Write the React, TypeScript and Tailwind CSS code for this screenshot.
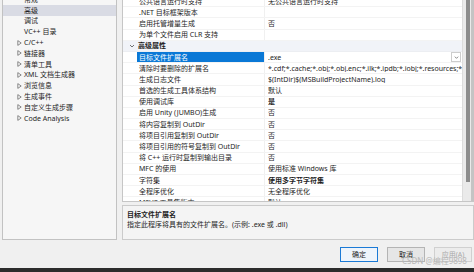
const FONT = "font-['Noto_Sans','Noto_Sans_CJK_SC',sans-serif]";

type TreeItem = { label: string; arrow?: boolean; active?: boolean };

const TREE: TreeItem[] = [
	{ label: "常规" },
	{ label: "高级", active: true },
	{ label: "调试" },
	{ label: "VC++ 目录" },
	{ label: "C/C++", arrow: true },
	{ label: "链接器", arrow: true },
	{ label: "清单工具", arrow: true },
	{ label: "XML 文档生成器", arrow: true },
	{ label: "浏览信息", arrow: true },
	{ label: "生成事件", arrow: true },
	{ label: "自定义生成步骤", arrow: true },
	{ label: "Code Analysis", arrow: true },
];

type Row = {
	name: string;
	value?: string;
	bold?: boolean;
	selected?: boolean;
	category?: boolean;
	dropdown?: boolean;
};

const ROWS: Row[] = [
	{ name: "公共语言运行时支持", value: "无公共语言运行时支持" },
	{ name: ".NET 目标框架版本", value: "" },
	{ name: "启用托管增量生成", value: "否" },
	{ name: "为单个文件启用 CLR 支持", value: "" },
	{ name: "高级属性", category: true },
	{ name: "目标文件扩展名", value: ".exe", selected: true, dropdown: true },
	{
		name: "清除时要删除的扩展名",
		value: "*.cdf;*.cache;*.obj;*.obj.enc;*.ilk;*.ipdb;*.iobj;*.resources;*.tlb;*.tli;*.tlh;*.tmp;*.rsp",
	},
	{ name: "生成日志文件", value: "$(IntDir)$(MSBuildProjectName).log" },
	{ name: "首选的生成工具体系结构", value: "默认" },
	{ name: "使用调试库", value: "是", bold: true },
	{ name: "启用 Unity (JUMBO)生成", value: "否" },
	{ name: "将内容复制到 OutDir", value: "否" },
	{ name: "将项目引用复制到 OutDir", value: "否" },
	{ name: "将项目引用的符号复制到 OutDir", value: "否" },
	{ name: "将 C++ 运行时复制到输出目录", value: "否" },
	{ name: "MFC 的使用", value: "使用标准 Windows 库" },
	{ name: "字符集", value: "使用多字节字符集", bold: true },
	{ name: "全程序优化", value: "无全程序优化" },
	{ name: "MSVC 工具集版本", value: "默认" },
];

function TreeArrow() {
	return (
		<svg width="5" height="6" viewBox="0 0 5 6" className="shrink-0">
			<path d="M0.8 0.6 L4.2 3 L0.8 5.4 Z" fill="none" stroke="#707070" strokeWidth="0.8" />
		</svg>
	);
}

function Chevron({ size = 6 }: { size?: number }) {
	return (
		<svg width={size} height={size} viewBox="0 0 6 6">
			<path d="M1 2 L3 4 L5 2" fill="none" stroke="#505050" strokeWidth="0.8" />
		</svg>
	);
}

function PropRow({ row }: { row: Row }) {
	if (row.category) {
		return (
			<div className="h-[11.2px] flex items-center bg-[#f1f3f8] border-b border-[#eceef2]">
				<div className="w-[15px] shrink-0 flex justify-center pl-[3px]">
					<Chevron />
				</div>
				<span className="font-bold text-[#1b1b1b]">{row.name}</span>
			</div>
		);
	}
	return (
		<div className="h-[11.2px] flex items-stretch border-b border-[#f3f3f3]">
			<div className="w-[14px] shrink-0" />
			<div
				className={`w-[127px] shrink-0 flex items-center pl-[2px] whitespace-nowrap overflow-hidden ${
					row.selected ? "bg-[#0a78d6] text-white" : "text-[#1e1e1e]"
				}`}
			>
				{row.name}
			</div>
			<div className="w-px bg-[#f0f0f0] shrink-0" />
			<div
				className={`flex-1 min-w-0 flex items-center pl-[3px] whitespace-nowrap overflow-hidden text-[#1e1e1e] ${
					row.bold ? "font-bold" : ""
				}`}
			>
				<span className="flex-1 min-w-0 overflow-hidden">{row.value}</span>
				{row.dropdown && (
					<div className="w-[10px] h-[10px] mr-[1px] border border-[#cdcdcd] bg-white flex items-center justify-center shrink-0">
						<Chevron size={5} />
					</div>
				)}
			</div>
		</div>
	);
}

export default function App() {
	return (
		<div className={`w-[474px] h-[272px] overflow-hidden bg-[#f0f0f0] relative flex flex-col text-[7px] leading-none ${FONT}`}>
			<div className="h-[268px] flex flex-col">
				<div className="h-[240px] flex">
					{/* tree */}
					<div className="ml-[2px] w-[115px] shrink-0 h-[240px] border border-t-0 border-[#c2c2c2] bg-[#f6f6f6] overflow-hidden">
						<div className="mt-[-6px]">
							{TREE.map((t) => (
								<div
									key={t.label}
									className={`h-[10.8px] flex items-center ${t.active ? "bg-[#d9dbe4]" : ""}`}
								>
									<div className="w-[21px] shrink-0 pl-[14px] flex items-center">
										{t.arrow && <TreeArrow />}
									</div>
									<span className="text-[#1e1e1e] whitespace-nowrap">{t.label}</span>
								</div>
							))}
						</div>
					</div>

					{/* right side */}
					<div className="ml-[5px] flex-1 min-w-0 flex flex-col">
						<div className="h-[202px] flex border-l border-b border-[#c6c6c6] bg-white overflow-hidden">
							<div className="flex-1 min-w-0 overflow-hidden">
								<div className="mt-[-4px]">
									{ROWS.map((r) => (
										<PropRow key={r.name} row={r} />
									))}
								</div>
							</div>
							<div className="w-[12px] shrink-0 bg-[#eaeaea] border-l border-[#dcdcdc] flex">
								<div className="ml-[3px] w-[4px] h-[182px] bg-[#8c8c8c]" />
								<div className="ml-auto w-[3px] bg-[#c4c4c4]" />
							</div>
						</div>
						<div className="mt-[3px] h-[35px] border border-[#cbcbcb] bg-[#f4f4f4] px-[4px] pt-[5px] flex flex-col gap-[3px] text-[#1e1e1e]">
							<div className="font-bold">目标文件扩展名</div>
							<div className="whitespace-nowrap">指定此程序将具有的文件扩展名。(示例: .exe 或 .dll)</div>
						</div>
					</div>
				</div>

				{/* buttons */}
				<div className="flex-1 flex items-center justify-end gap-[9px] pr-[2px] pt-[1px]">
					<button className="w-[38px] h-[15px] border border-[#1b7ad6] bg-[#eef4fb] text-[#1e1e1e] flex items-center justify-center">
						确定
					</button>
					<button className="w-[38px] h-[15px] border border-[#b4b4b4] bg-[#e6e6e6] text-[#1e1e1e] flex items-center justify-center">
						取消
					</button>
					<button className="w-[38px] h-[15px] border border-[#d0d0d0] bg-[#ececec] text-[#a8a8a8] flex items-center justify-center">
						应用(A)
					</button>
				</div>
			</div>
			<div className="h-[4px] bg-[#2c2c2c]" />

			<div className="absolute left-[402px] top-[257px] text-[8px] text-[#b8b8b8] whitespace-nowrap">
				CSDN @编程9898
			</div>
		</div>
	);
}
